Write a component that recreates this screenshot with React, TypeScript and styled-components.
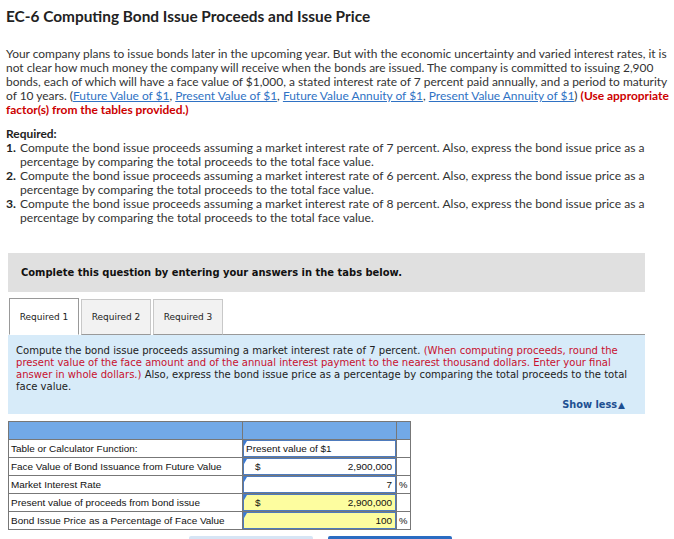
import styled, { createGlobalStyle } from 'styled-components';

const GlobalStyle = createGlobalStyle`
	html, body {
		margin: 0;
		padding: 0;
		background: #fff;
	}
	body {
		font-family: 'Lato', 'Open Sans', sans-serif;
		color: #222;
	}
`;

const introLines = [
	'Your company plans to issue bonds later in the upcoming year. But with the economic uncertainty and varied interest rates, it is',
	'not clear how much money the company will receive when the bonds are issued. The company is committed to issuing 2,900',
	'bonds, each of which will have a face value of $1,000, a stated interest rate of 7 percent paid annually, and a period to maturity',
];

const requirements = [
	['Compute the bond issue proceeds assuming a market interest rate of 7 percent. Also, express the bond issue price as a', 'percentage by comparing the total proceeds to the total face value.'],
	['Compute the bond issue proceeds assuming a market interest rate of 6 percent. Also, express the bond issue price as a', 'percentage by comparing the total proceeds to the total face value.'],
	['Compute the bond issue proceeds assuming a market interest rate of 8 percent. Also, express the bond issue price as a', 'percentage by comparing the total proceeds to the total face value.'],
];

const tableRows = [
	{ label: 'Table or Calculator Function:', value: 'Present value of $1', kind: 'text', unit: '' },
	{ label: 'Face Value of Bond Issuance from Future Value', value: '2,900,000', kind: 'money', unit: '' },
	{ label: 'Market Interest Rate', value: '7', kind: 'plain', unit: '%' },
	{ label: 'Present value of proceeds from bond issue', value: '2,900,000', kind: 'money', unit: '', calc: true },
	{ label: 'Bond Issue Price as a Percentage of Face Value', value: '100', kind: 'plain', unit: '%', calc: true },
];

const App = () => {
	return (
		<>
			<GlobalStyle />
			<Page>
				<Title>EC-6 Computing Bond Issue Proceeds and Issue Price</Title>
				<Intro>
					{introLines.map((line) => (
						<Line key={line}>{line}</Line>
					))}
					<Line>
						of 10 years. (<Link>Future Value of $1</Link>, <Link>Present Value of $1</Link>,{' '}
						<Link>Future Value Annuity of $1</Link>, <Link>Present Value Annuity of $1</Link>){' '}
						<Warn>(Use appropriate</Warn>
					</Line>
					<Line>
						<Warn>factor(s) from the tables provided.)</Warn>
					</Line>
				</Intro>

				<RequiredHead>Required:</RequiredHead>
				<ReqList>
					{requirements.map(([first, second], i) => (
						<ReqItem key={i}>
							<ReqNum>{i + 1}.</ReqNum>
							<div>
								<Line>{first}</Line>
								<Line>{second}</Line>
							</div>
						</ReqItem>
					))}
				</ReqList>

				<Instruction>Complete this question by entering your answers in the tabs below.</Instruction>

				<Tabs>
					<Tab active>Required 1</Tab>
					<Tab>Required 2</Tab>
					<Tab>Required 3</Tab>
					<TabFill />
				</Tabs>

				<Panel>
					<PanelLine>
						Compute the bond issue proceeds assuming a market interest rate of 7 percent.{' '}
						<PanelWarn>(When computing proceeds, round the</PanelWarn>
					</PanelLine>
					<PanelLine>
						<PanelWarn>
							present value of the face amount and of the annual interest payment to the nearest thousand dollars. Enter your final
						</PanelWarn>
					</PanelLine>
					<PanelLine>
						<PanelWarn>answer in whole dollars.)</PanelWarn> Also, express the bond issue price as a percentage by comparing the total proceeds to the total
					</PanelLine>
					<PanelLine>face value.</PanelLine>
					<ShowLess>
						Show less<Arrow>▲</Arrow>
					</ShowLess>
				</Panel>

				<Sheet>
					<tbody>
						<tr>
							<HeadCell />
							<HeadCell />
							<HeadCell />
						</tr>
						{tableRows.map((row) => (
							<tr key={row.label}>
								<LabelCell>{row.label}</LabelCell>
								<InputCell>
									<Entry calc={row.calc} align={row.kind === 'text' ? 'left' : 'right'}>
										<Corner />
										{row.kind === 'money' && <Dollar>$</Dollar>}
										<span>{row.value}</span>
									</Entry>
								</InputCell>
								<UnitCell>{row.unit}</UnitCell>
							</tr>
						))}
					</tbody>
				</Sheet>

				<Buttons>
					<NavButton />
					<NavButton primary />
				</Buttons>
			</Page>
		</>
	);
};

const Page = styled.div`
	padding: 6px 0 0 6px;
	width: 668px;
	height: 533px;
	overflow: hidden;
`;

const Title = styled.h1`
	margin: 0;
	font-size: 15.4px;
	font-weight: 700;
	line-height: 20px;
	color: #222;
`;

const Intro = styled.div`
	margin-top: 21px;
	font-size: 11.95px;
	line-height: 14px;
	color: #333;
`;

const Line = styled.div`
	white-space: nowrap;
`;

const Link = styled.span`
	color: #2f72c4;
	text-decoration: underline;
`;

const Warn = styled.span`
	color: #c00;
	font-weight: 700;
`;

const RequiredHead = styled.div`
	margin-top: 10px;
	font-size: 11.95px;
	line-height: 14px;
	font-weight: 700;
	color: #222;
`;

const ReqList = styled.div`
	display: flex;
	flex-direction: column;
	font-size: 12.1px;
	line-height: 14px;
	color: #333;
`;

const ReqItem = styled.div`
	display: flex;
`;

const ReqNum = styled.span`
	width: 14px;
	font-weight: 700;
	color: #222;
`;

const Instruction = styled.div`
	margin: 28px 0 0 2px;
	width: 637px;
	height: 39px;
	box-sizing: border-box;
	padding: 0 13px;
	display: flex;
	align-items: center;
	background: #e0e0e0;
	font-family: 'DejaVu Sans', Verdana, sans-serif;
	font-size: 9.95px;
	font-weight: 700;
	color: #111;
`;

const Tabs = styled.div`
	display: flex;
	align-items: flex-end;
	margin: 6px 0 0 3px;
	width: 636px;
	height: 37px;
`;

const Tab = styled.div<{ active?: boolean }>`
	width: 70px;
	box-sizing: border-box;
	margin-right: 2px;
	display: flex;
	align-items: center;
	justify-content: center;
	border: 1px solid ${(p) => (p.active ? '#999' : '#c8c8c8')};
	border-bottom: ${(p) => (p.active ? '1px solid #fff' : '1px solid #999')};
	background: ${(p) => (p.active ? '#fff' : '#f2f2f2')};
	height: ${(p) => (p.active ? '37px' : '36px')};
	font-family: 'DejaVu Sans', Verdana, sans-serif;
	font-size: 9px;
	color: #222;
`;

const TabFill = styled.div`
	flex: 1;
	height: 1px;
	background: #999;
	margin-left: -2px;
`;

const Panel = styled.div`
	position: relative;
	margin-left: 2px;
	width: 637px;
	height: 79px;
	box-sizing: border-box;
	padding: 10px 8px 0;
	background: #d7ebf9;
	font-family: 'DejaVu Sans', Verdana, sans-serif;
	font-size: 10.05px;
	line-height: 12px;
	color: #222;
`;

const PanelLine = styled.div`
	white-space: nowrap;
`;

const PanelWarn = styled.span`
	color: #c8102e;
`;

const ShowLess = styled.div`
	position: absolute;
	right: 20px;
	bottom: 3px;
	font-size: 9.8px;
	font-weight: 700;
	color: #1d4f91;
`;

const Arrow = styled.span`
	font-size: 9px;
	margin-left: 1px;
`;

const Sheet = styled.table`
	margin: 7px 0 0 2px;
	border-collapse: collapse;
	font-family: 'Liberation Sans', Arial, sans-serif;
	font-size: 9.95px;
	color: #111;
`;

const HeadCell = styled.td`
	height: 17px;
	padding: 0;
	background: #72a9e7;
	border: 1px solid #777;
`;

const LabelCell = styled.td`
	width: 231px;
	height: 17px;
	padding: 0 0 0 2px;
	border: 1px solid #777;
	white-space: nowrap;
`;

const InputCell = styled.td`
	width: 153px;
	padding: 0;
	border: 1px solid #777;
`;

const Entry = styled.div<{ calc?: boolean; align: 'left' | 'right' }>`
	position: relative;
	height: 17px;
	box-sizing: border-box;
	display: flex;
	align-items: center;
	justify-content: ${(p) => (p.align === 'left' ? 'flex-start' : 'space-between')};
	padding: 0 3px 0 2px;
	border: 1px solid #4e7bbd;
	border-width: 1px 1.5px;
	background: ${(p) => (p.calc ? '#fdfd9f' : '#fff')};
	span:last-child {
		margin-left: auto;
	}
	span:only-of-type {
		margin-left: ${(p) => (p.align === 'left' ? '0' : 'auto')};
	}
`;

const Corner = styled.i`
	position: absolute;
	top: 0;
	left: 0;
	width: 0;
	height: 0;
	border-top: 5px solid #3a7bd5;
	border-right: 3px solid transparent;
`;

const Dollar = styled.span`
	margin-left: 9px;
`;

const UnitCell = styled.td`
	width: 11px;
	padding: 0 0 0 2px;
	border: 1px solid #777;
	font-size: 9.5px;
`;

const Buttons = styled.div`
	display: flex;
	gap: 15px;
	margin: 6px 0 0 183px;
`;

const NavButton = styled.div<{ primary?: boolean }>`
	width: 124px;
	height: 30px;
	border-radius: 2px;
	background: ${(p) => (p.primary ? '#2a6cc2' : '#d6e5f5')};
`;

export default App;
